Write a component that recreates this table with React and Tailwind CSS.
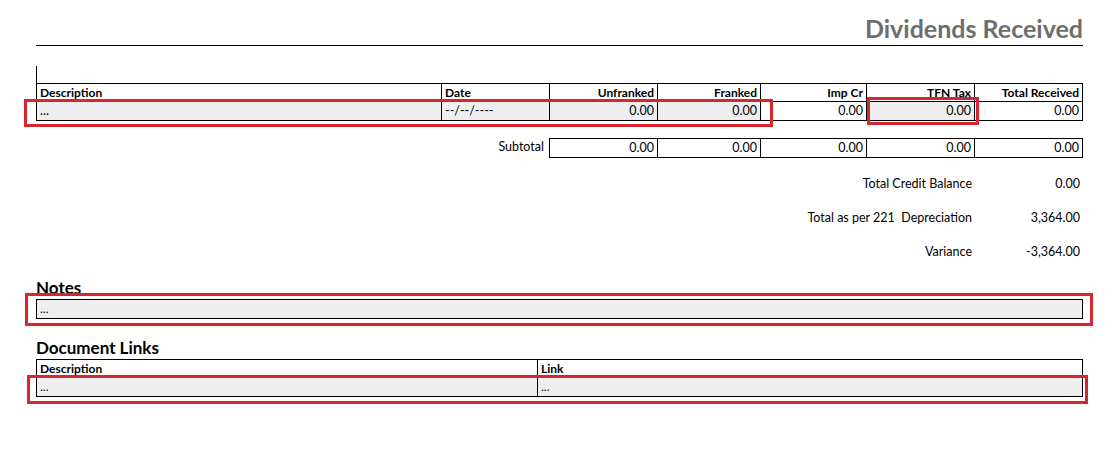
const cols = [
  { label: "Description", w: "w-[405px]", align: "text-left", value: "...", grey: true },
  { label: "Date", w: "w-[108px]", align: "text-left", value: "--/--/----", grey: true },
  { label: "Unfranked", w: "w-[108px]", align: "text-right", value: "0.00", grey: true },
  { label: "Franked", w: "w-[103px]", align: "text-right", value: "0.00", grey: true },
  { label: "Imp Cr", w: "w-[106px]", align: "text-right", value: "0.00", grey: false },
  { label: "TFN Tax", w: "w-[108px]", align: "text-right", value: "0.00", grey: true },
  { label: "Total Received", w: "flex-1", align: "text-right", value: "0.00", grey: false },
];

const subCols = ["w-[108px]", "w-[103px]", "w-[106px]", "w-[108px]", "flex-1"];

const summary = [
  ["Total Credit Balance", "0.00"],
  ["Total as per 221  Depreciation", "3,364.00"],
  ["Variance", "-3,364.00"],
];

export default function App() {
  return (
    <div className="min-h-screen bg-white text-black font-['Lato',sans-serif]">
      <div className="ml-[36px] w-[1047px]">
        {/* Title */}
        <div className="h-[46px] flex items-end justify-end border-b border-black pb-[2px]">
          <h1 className="text-[25px] leading-[30px] font-bold text-[#6e6e6e]">Dividends Received</h1>
        </div>

        <div className="mt-[20px] h-[17px] border-l border-black" />

        {/* Dividends table */}
        <div className="relative border border-black text-[12px]">
          <div className="flex h-[18px] border-b border-black font-bold leading-[17px]">
            {cols.map((c, i) => (
              <div
                key={c.label}
                className={`${c.w} ${c.align} px-[3px] ${i < cols.length - 1 ? "border-r border-black" : ""}`}
              >
                {c.label}
              </div>
            ))}
          </div>
          <div className="flex h-[18px] leading-[18px] text-[12.5px]">
            {cols.map((c, i) => (
              <div
                key={c.label}
                className={`${c.w} ${c.align} px-[3px] ${c.grey ? "bg-[#efefef]" : "bg-white"} ${i < cols.length - 1 ? "border-r border-black" : ""}`}
              >
                {c.value}
              </div>
            ))}
          </div>
          <div className="absolute left-[-13px] top-[15px] w-[749px] h-[28px] border-[3px] border-[#d7262d]" />
          <div className="absolute left-[830px] top-[13px] w-[112px] h-[28px] border-[3px] border-[#d7262d]" />
        </div>

        {/* Subtotal */}
        <div className="mt-[17px] flex text-[12.5px] leading-[18px]">
          <div className="w-[513px] text-right pr-[5px]">Subtotal</div>
          <div className="flex-1 flex h-[20px] border border-black">
            {subCols.map((w, i) => (
              <div
                key={i}
                className={`${w} text-right px-[3px] ${i < subCols.length - 1 ? "border-r border-black" : ""}`}
              >
                0.00
              </div>
            ))}
          </div>
        </div>

        {/* Summary */}
        <div className="mt-[9px] text-[12.5px]">
          {summary.map(([label, value]) => (
            <div key={label} className="flex h-[34px] items-center">
              <div className="flex-1 text-right pr-[2px] whitespace-pre">{label}</div>
              <div className="w-[109px] text-right pr-[3px]">{value}</div>
            </div>
          ))}
        </div>

        {/* Notes */}
        <h2 className="mt-[9px] h-[21px] text-[17px] leading-[20px] font-bold">Notes</h2>
        <div className="relative h-[20px] border border-black bg-[#efefef] px-[3px] text-[12px] leading-[18px]">
          ...
          <div className="absolute left-[-12px] top-[-7px] w-[1068px] h-[33px] border-[3px] border-[#d7262d]" />
        </div>

        {/* Document links */}
        <h2 className="mt-[19px] h-[21px] text-[17px] leading-[20px] font-bold">Document Links</h2>
        <div className="relative border border-black text-[12px]">
          <div className="flex h-[18px] border-b border-black font-bold leading-[17px]">
            <div className="w-[501px] px-[3px] border-r border-black">Description</div>
            <div className="flex-1 px-[3px]">Link</div>
          </div>
          <div className="flex h-[18px] leading-[18px] bg-[#efefef]">
            <div className="w-[501px] px-[3px] border-r border-black">...</div>
            <div className="flex-1 px-[3px]">...</div>
          </div>
          <div className="absolute left-[-10px] top-[15px] w-[1061px] h-[29px] border-[3px] border-[#d7262d]" />
        </div>
      </div>
    </div>
  );
}
